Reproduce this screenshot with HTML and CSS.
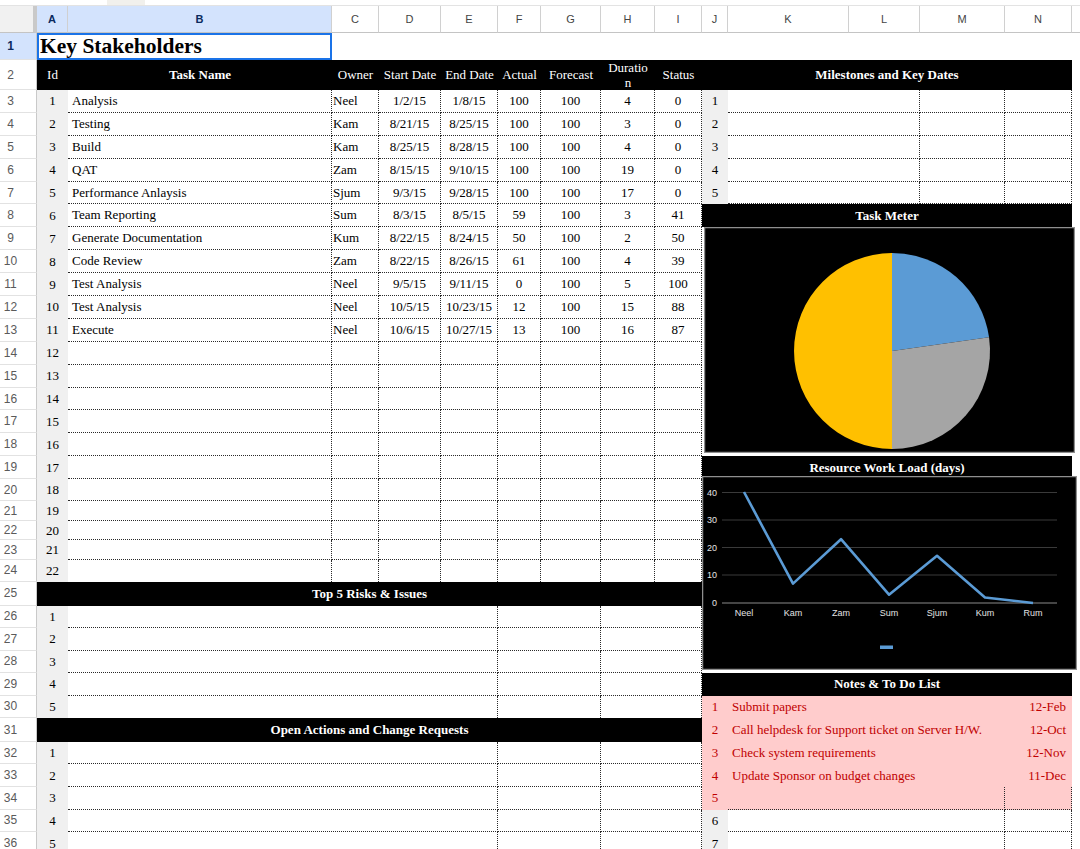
FILE: index.html
```html
<!DOCTYPE html>
<html>
<head>
<meta charset="utf-8">
<link rel="stylesheet" href="styles.css">
</head>
<body>
<div class="sheet">
  <div class="topstrip"><div class="tsblock"></div></div>
  <div class="row colhdr">
    <div class="corner"></div>
    <div class="ch sel">A</div><div class="ch sel">B</div>
    <div class="ch">C</div><div class="ch">D</div><div class="ch">E</div><div class="ch">F</div><div class="ch">G</div><div class="ch">H</div><div class="ch">I</div>
    <div class="ch">J</div><div class="ch">K</div><div class="ch">L</div><div class="ch">M</div><div class="ch">N</div><div class="ch last"></div>
  </div>

  <div class="row h27">
    <div class="rn sel">1</div>
    <div class="title s2">Key Stakeholders</div>
  </div>

  <div class="row h30">
    <div class="rn">2</div>
    <div class="hc">Id</div>
    <div class="hc b">Task Name</div>
    <div class="hc">Owner</div>
    <div class="hc">Start Date</div>
    <div class="hc">End Date</div>
    <div class="hc">Actual</div>
    <div class="hc">Forecast</div>
    <div class="hc two">Duratio<br>n</div>
    <div class="hc">Status</div>
    <div class="hc b s5">Milestones and Key Dates</div>
  </div>

  <div class="row h229">
    <div class="rn">3</div><div class="id">1</div>
    <div class="tc lft">Analysis</div><div class="tc own">Neel</div><div class="tc">1/2/15</div><div class="tc">1/8/15</div><div class="tc">100</div><div class="tc">100</div><div class="tc">4</div><div class="tc">0</div>
    <div class="id">1</div><div class="mc s2"></div><div class="mc"></div><div class="mc"></div>
  </div>
  <div class="row h229">
    <div class="rn">4</div><div class="id">2</div>
    <div class="tc lft">Testing</div><div class="tc own">Kam</div><div class="tc">8/21/15</div><div class="tc">8/25/15</div><div class="tc">100</div><div class="tc">100</div><div class="tc">3</div><div class="tc">0</div>
    <div class="id">2</div><div class="mc s2"></div><div class="mc"></div><div class="mc"></div>
  </div>
  <div class="row h229">
    <div class="rn">5</div><div class="id">3</div>
    <div class="tc lft">Build</div><div class="tc own">Kam</div><div class="tc">8/25/15</div><div class="tc">8/28/15</div><div class="tc">100</div><div class="tc">100</div><div class="tc">4</div><div class="tc">0</div>
    <div class="id">3</div><div class="mc s2"></div><div class="mc"></div><div class="mc"></div>
  </div>
  <div class="row h229">
    <div class="rn">6</div><div class="id">4</div>
    <div class="tc lft">QAT</div><div class="tc own">Zam</div><div class="tc">8/15/15</div><div class="tc">9/10/15</div><div class="tc">100</div><div class="tc">100</div><div class="tc">19</div><div class="tc">0</div>
    <div class="id">4</div><div class="mc s2"></div><div class="mc"></div><div class="mc"></div>
  </div>
  <div class="row h229">
    <div class="rn">7</div><div class="id">5</div>
    <div class="tc lft">Performance Anlaysis</div><div class="tc own">Sjum</div><div class="tc">9/3/15</div><div class="tc">9/28/15</div><div class="tc">100</div><div class="tc">100</div><div class="tc">17</div><div class="tc">0</div>
    <div class="id">5</div><div class="mc s2"></div><div class="mc"></div><div class="mc"></div>
  </div>
  <div class="row h229">
    <div class="rn">8</div><div class="id">6</div>
    <div class="tc lft">Team Reporting</div><div class="tc own">Sum</div><div class="tc">8/3/15</div><div class="tc">8/5/15</div><div class="tc">59</div><div class="tc">100</div><div class="tc">3</div><div class="tc">41</div>
    <div class="hc b s5">Task Meter</div>
  </div>
  <div class="row h229">
    <div class="rn">9</div><div class="id">7</div>
    <div class="tc lft">Generate Documentation</div><div class="tc own">Kum</div><div class="tc">8/22/15</div><div class="tc">8/24/15</div><div class="tc">50</div><div class="tc">100</div><div class="tc">2</div><div class="tc">50</div>
  </div>
  <div class="row h229">
    <div class="rn">10</div><div class="id">8</div>
    <div class="tc lft">Code Review</div><div class="tc own">Zam</div><div class="tc">8/22/15</div><div class="tc">8/26/15</div><div class="tc">61</div><div class="tc">100</div><div class="tc">4</div><div class="tc">39</div>
  </div>
  <div class="row h229">
    <div class="rn">11</div><div class="id">9</div>
    <div class="tc lft">Test Analysis</div><div class="tc own">Neel</div><div class="tc">9/5/15</div><div class="tc">9/11/15</div><div class="tc">0</div><div class="tc">100</div><div class="tc">5</div><div class="tc">100</div>
  </div>
  <div class="row h229">
    <div class="rn">12</div><div class="id">10</div>
    <div class="tc lft">Test Analysis</div><div class="tc own">Neel</div><div class="tc">10/5/15</div><div class="tc">10/23/15</div><div class="tc">12</div><div class="tc">100</div><div class="tc">15</div><div class="tc">88</div>
  </div>
  <div class="row h229">
    <div class="rn">13</div><div class="id">11</div>
    <div class="tc lft">Execute</div><div class="tc own">Neel</div><div class="tc">10/6/15</div><div class="tc">10/27/15</div><div class="tc">13</div><div class="tc">100</div><div class="tc">16</div><div class="tc">87</div>
  </div>
  <div class="row h229">
    <div class="rn">14</div><div class="id">12</div>
    <div class="tc"></div><div class="tc"></div><div class="tc"></div><div class="tc"></div><div class="tc"></div><div class="tc"></div><div class="tc"></div><div class="tc"></div>
  </div>
  <div class="row h229">
    <div class="rn">15</div><div class="id">13</div>
    <div class="tc"></div><div class="tc"></div><div class="tc"></div><div class="tc"></div><div class="tc"></div><div class="tc"></div><div class="tc"></div><div class="tc"></div>
  </div>
  <div class="row h229">
    <div class="rn">16</div><div class="id">14</div>
    <div class="tc"></div><div class="tc"></div><div class="tc"></div><div class="tc"></div><div class="tc"></div><div class="tc"></div><div class="tc"></div><div class="tc"></div>
  </div>
  <div class="row h229">
    <div class="rn">17</div><div class="id">15</div>
    <div class="tc"></div><div class="tc"></div><div class="tc"></div><div class="tc"></div><div class="tc"></div><div class="tc"></div><div class="tc"></div><div class="tc"></div>
  </div>
  <div class="row h229">
    <div class="rn">18</div><div class="id">16</div>
    <div class="tc"></div><div class="tc"></div><div class="tc"></div><div class="tc"></div><div class="tc"></div><div class="tc"></div><div class="tc"></div><div class="tc"></div>
  </div>
  <div class="row h228">
    <div class="rn">19</div><div class="id">17</div>
    <div class="tc"></div><div class="tc"></div><div class="tc"></div><div class="tc"></div><div class="tc"></div><div class="tc"></div><div class="tc"></div><div class="tc"></div>
    <div class="hc b s5">Resource Work Load (days)</div>
  </div>
  <div class="row h224">
    <div class="rn">20</div><div class="id">18</div>
    <div class="tc"></div><div class="tc"></div><div class="tc"></div><div class="tc"></div><div class="tc"></div><div class="tc"></div><div class="tc"></div><div class="tc"></div>
  </div>
  <div class="row h195">
    <div class="rn">21</div><div class="id">19</div>
    <div class="tc"></div><div class="tc"></div><div class="tc"></div><div class="tc"></div><div class="tc"></div><div class="tc"></div><div class="tc"></div><div class="tc"></div>
  </div>
  <div class="row h195">
    <div class="rn">22</div><div class="id">20</div>
    <div class="tc"></div><div class="tc"></div><div class="tc"></div><div class="tc"></div><div class="tc"></div><div class="tc"></div><div class="tc"></div><div class="tc"></div>
  </div>
  <div class="row h195">
    <div class="rn">23</div><div class="id">21</div>
    <div class="tc"></div><div class="tc"></div><div class="tc"></div><div class="tc"></div><div class="tc"></div><div class="tc"></div><div class="tc"></div><div class="tc"></div>
  </div>
  <div class="row h218">
    <div class="rn">24</div><div class="id">22</div>
    <div class="tc nb"></div><div class="tc nb"></div><div class="tc nb"></div><div class="tc nb"></div><div class="tc nb"></div><div class="tc nb"></div><div class="tc nb"></div><div class="tc nb"></div>
  </div>

  <div class="row h24">
    <div class="rn">25</div>
    <div class="hc b s9">Top 5 Risks &amp; Issues</div>
  </div>
  <div class="row h225">
    <div class="rn">26</div><div class="id">1</div>
    <div class="tc s4"></div><div class="tc s2"></div><div class="tc s2"></div>
  </div>
  <div class="row h225">
    <div class="rn">27</div><div class="id">2</div>
    <div class="tc s4"></div><div class="tc s2"></div><div class="tc s2"></div>
  </div>
  <div class="row h225">
    <div class="rn">28</div><div class="id">3</div>
    <div class="tc s4"></div><div class="tc s2"></div><div class="tc s2"></div>
  </div>
  <div class="row h225">
    <div class="rn">29</div><div class="id">4</div>
    <div class="tc s4"></div><div class="tc s2"></div><div class="tc s2"></div>
    <div class="hc b s5">Notes &amp; To Do List</div>
  </div>
  <div class="row h225">
    <div class="rn">30</div><div class="id">5</div>
    <div class="tc s4 nb"></div><div class="tc s2 nb"></div><div class="tc s2 nb"></div>
    <div class="pk num">1</div><div class="pk txt s3">Submit papers</div><div class="pk date">12-Feb</div>
  </div>

  <div class="row h236">
    <div class="rn">31</div>
    <div class="hc b s9">Open Actions and Change Requests</div>
    <div class="pk num">2</div><div class="pk txt s3">Call helpdesk for Support ticket on Server H/W.</div><div class="pk date">12-Oct</div>
  </div>
  <div class="row h226">
    <div class="rn">32</div><div class="id">1</div>
    <div class="tc s4"></div><div class="tc s2"></div><div class="tc s2"></div>
    <div class="pk num">3</div><div class="pk txt s3">Check system requirements</div><div class="pk date">12-Nov</div>
  </div>
  <div class="row h226">
    <div class="rn">33</div><div class="id">2</div>
    <div class="tc s4"></div><div class="tc s2"></div><div class="tc s2"></div>
    <div class="pk num">4</div><div class="pk txt s3">Update Sponsor on budget changes</div><div class="pk date">11-Dec</div>
  </div>
  <div class="row h226">
    <div class="rn">34</div><div class="id">3</div>
    <div class="tc s4"></div><div class="tc s2"></div><div class="tc s2"></div>
    <div class="pk num">5</div><div class="pk txt s3 dot"></div><div class="pk date dot"></div>
  </div>
  <div class="row h226">
    <div class="rn">35</div><div class="id">4</div>
    <div class="tc s4"></div><div class="tc s2"></div><div class="tc s2"></div>
    <div class="id">6</div><div class="mc s3"></div><div class="mc"></div>
  </div>
  <div class="row h226">
    <div class="rn">36</div><div class="id">5</div>
    <div class="tc s4"></div><div class="tc s2"></div><div class="tc s2"></div>
    <div class="id">7</div><div class="mc s3"></div><div class="mc"></div>
  </div>

  <svg class="chart pie" width="371" height="226" viewBox="0 0 371 226">
    <rect x="0.5" y="0.5" width="370" height="225" fill="#000" stroke="#8f8f8f" stroke-width="1.5"/>
    <path d="M188,124 L188,26 A98,98 0 0 1 285.05,110.36 Z" fill="#5b9bd5"/>
    <path d="M188,124 L285.05,110.36 A98,98 0 0 1 188,222 Z" fill="#a5a5a5"/>
    <path d="M188,124 L188,222 A98,98 0 0 1 188,26 Z" fill="#ffc000"/>
  </svg>

  <svg class="chart line" width="375" height="194" viewBox="0 0 375 194">
    <rect x="0.5" y="0.5" width="374" height="193" fill="#000" stroke="#8f8f8f" stroke-width="1.5"/>
    <g stroke="#3a3a3a" stroke-width="1">
      <line x1="20" y1="16.5" x2="355" y2="16.5"/>
      <line x1="20" y1="44" x2="355" y2="44"/>
      <line x1="20" y1="71.5" x2="355" y2="71.5"/>
      <line x1="20" y1="99" x2="355" y2="99"/>
    </g>
    <line x1="20" y1="127" x2="355" y2="127" stroke="#8a8a8a" stroke-width="1"/>
    <g class="axis" text-anchor="end">
      <text x="15" y="19.5">40</text>
      <text x="15" y="47">30</text>
      <text x="15" y="74.5">20</text>
      <text x="15" y="102">10</text>
      <text x="15" y="130">0</text>
    </g>
    <g class="axis" text-anchor="middle">
      <text x="42" y="140">Neel</text>
      <text x="91" y="140">Kam</text>
      <text x="139" y="140">Zam</text>
      <text x="187" y="140">Sum</text>
      <text x="235" y="140">Sjum</text>
      <text x="283" y="140">Kum</text>
      <text x="331" y="140">Rum</text>
    </g>
    <polyline points="42,16 91,107.6 139,63.2 187,118.7 235,79.8 283,121.5 331,127" fill="none" stroke="#5b9bd5" stroke-width="2.6" stroke-linejoin="round"/>
    <rect x="178" y="169.5" width="13" height="3.5" fill="#5b9bd5"/>
  </svg>
</div>
</body>
</html>
```

FILE: styles.css
```css
:root {
  --cols: 37px 31px 264px 47px 62px 57px 43px 60px 54px 47px 26px 121px 71px 85px 67px 1fr;
  --dot: 1px dotted #2a2a2a;
}
* { box-sizing: border-box; }
html, body { margin: 0; padding: 0; background: #fff; }
body {
  width: 1080px;
  height: 849px;
  overflow: hidden;
  font-family: "Liberation Serif", "Times New Roman", serif;
  font-size: 13px;
  color: #000;
}
.sheet { position: relative; width: 1080px; }

.topstrip {
  height: 6px;
  border-bottom: 1px solid #e3e3e3;
  display: flex;
  padding-left: 107px;
}
.tsblock { width: 38px; height: 5px; background: #f1f0ec; }

.row {
  display: grid;
  grid-template-columns: var(--cols);
}
.row > div { min-width: 0; overflow: hidden; white-space: nowrap; }

.colhdr { height: 27px; font-family: "Liberation Sans", Arial, sans-serif; font-size: 11px; color: #444; }
.corner { background: #f1f1f1; border-right: 4px solid #c9c9c9; border-bottom: 1px solid #c4c4c4; }
.ch {
  display: flex; align-items: center; justify-content: center;
  border-right: 1px solid #d0d0d0;
  border-bottom: 1px solid #c4c4c4;
}
.ch.sel { background: #d3e3fd; color: #0a2a5e; font-weight: bold; }
.ch.last { border-right: none; }

.h27 { height: 27px; }
.h30 { height: 30px; }
.h229 { height: 22.9px; }
.h228 { height: 22.8px; }
.h224 { height: 22.4px; }
.h195 { height: 19.5px; }
.h218 { height: 21.8px; }
.h24 { height: 24px; }
.h225 { height: 22.5px; }
.h236 { height: 23.6px; }
.h226 { height: 22.6px; }

.s2 { grid-column: span 2; }
.s3 { grid-column: span 3; }
.s4 { grid-column: span 4; }
.s5 { grid-column: span 5; }
.s9 { grid-column: span 9; }

.rn {
  display: flex; align-items: center; justify-content: center;
  padding-right: 15px;
  font-family: "Liberation Sans", Arial, sans-serif;
  font-size: 12px;
  color: #5a5a5a;
  border-right: 1px solid #c9c9c9;
  border-bottom: 1px solid #e2e2e2;
  background: #fff;
}
.rn.sel { background: #d3e3fd; color: #0a2a5e; font-weight: bold; }

.title {
  border: 2px solid #1a73e8;
  font-weight: bold;
  font-size: 21.5px;
  line-height: 23px;
  padding-left: 1px;
  display: flex; align-items: center;
}

.hc {
  background: #000;
  color: #fff;
  display: flex; align-items: center; justify-content: center;
  text-align: center;
}
.hc.b { font-weight: bold; }
.hc.two { line-height: 15px; padding-bottom: 1px; }

.id {
  background: #f0f0f0;
  display: flex; align-items: center; justify-content: center;
}

.tc {
  border-right: var(--dot);
  border-bottom: var(--dot);
  display: flex; align-items: center; justify-content: center;
}
.tc.nb { border-bottom: none; }
.tc.lft { justify-content: flex-start; padding-left: 4px; }
.tc.own { justify-content: flex-start; padding-left: 1px; }

.mc {
  border-right: var(--dot);
  border-bottom: var(--dot);
}

.pk {
  background: #ffcccc;
  color: #c00000;
  display: flex; align-items: center;
}
.pk.num { justify-content: center; }
.pk.txt { padding-left: 4px; }
.pk.date { justify-content: flex-end; padding-right: 6px; }
.pk.dot { border-right: var(--dot); border-bottom: var(--dot); }

.chart { position: absolute; display: block; }
.pie { left: 704px; top: 227px; }
.line { left: 702px; top: 476px; }
.axis { font-family: "Liberation Sans", Arial, sans-serif; font-size: 9px; fill: #e4e4e4; }
```
